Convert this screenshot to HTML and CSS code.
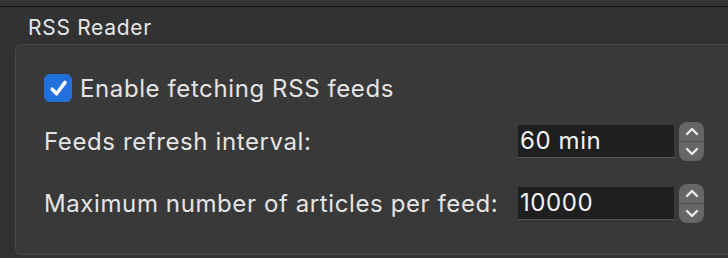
FILE: index.html
```html
<!DOCTYPE html>
<html>
<head>
<meta charset="utf-8">
<link rel="stylesheet" href="styles.css">
</head>
<body>
<div class="window">
  <div class="topbar"></div>
  <div class="title">RSS Reader</div>
  <div class="box">
    <div class="row row-check">
      <span class="checkbox">
        <svg width="27" height="27" viewBox="0 0 27 27"><path d="M7.2 14.2 L11.6 18.8 L20 7.4" fill="none" stroke="#fff" stroke-width="3.5" stroke-linecap="round" stroke-linejoin="round"/></svg>
      </span>
      <span class="label">Enable fetching RSS feeds</span>
    </div>
    <div class="row row-field row-1">
      <span class="label grow">Feeds refresh interval:</span>
      <span class="field">60 min</span>
      <span class="stepper">
        <span class="half up"><svg width="14" height="9" viewBox="0 0 14 9"><path d="M2 7 L7 2 L12 7" fill="none" stroke="#ececec" stroke-width="2.4" stroke-linecap="round" stroke-linejoin="round"/></svg></span>
        <span class="half down"><svg width="14" height="9" viewBox="0 0 14 9"><path d="M2 2 L7 7 L12 2" fill="none" stroke="#ececec" stroke-width="2.4" stroke-linecap="round" stroke-linejoin="round"/></svg></span>
      </span>
    </div>
    <div class="row row-field row-2">
      <span class="label grow">Maximum number of articles per feed:</span>
      <span class="field">10000</span>
      <span class="stepper">
        <span class="half up"><svg width="14" height="9" viewBox="0 0 14 9"><path d="M2 7 L7 2 L12 7" fill="none" stroke="#ececec" stroke-width="2.4" stroke-linecap="round" stroke-linejoin="round"/></svg></span>
        <span class="half down"><svg width="14" height="9" viewBox="0 0 14 9"><path d="M2 2 L7 7 L12 2" fill="none" stroke="#ececec" stroke-width="2.4" stroke-linecap="round" stroke-linejoin="round"/></svg></span>
      </span>
    </div>
  </div>
</div>
</body>
</html>
```

FILE: styles.css
```css
html, body {
  margin: 0;
  padding: 0;
  background: #323232;
}
body {
  width: 728px;
  height: 258px;
  overflow: hidden;
  font-family: Inter, "Liberation Sans", sans-serif;
  color: #e8e8e8;
}
.window {
  width: 728px;
  height: 258px;
}
.topbar {
  height: 6px;
  background: #333333;
  border-bottom: 1px solid #141414;
}
.title {
  height: 37px;
  box-sizing: border-box;
  padding-left: 28px;
  padding-top: 5px;
  font-size: 21px;
  letter-spacing: 0.7px;
  line-height: 32px;
  color: #e6e6e6;
}
.box {
  margin-left: 15px;
  width: 713px;
  height: 211px;
  box-sizing: border-box;
  border: 1px solid #4a4a4a;
  border-right: none;
  border-radius: 7px 0 0 7px;
  background: #393939;
  padding: 29px 0 0 28px;
}
.row {
  display: flex;
  align-items: center;
}
.row-check {
  height: 28px;
  gap: 8px;
}
.row-1 {
  height: 40px;
  margin-top: 19px;
}
.row-2 {
  height: 40px;
  margin-top: 22px;
}
.label {
  font-size: 24px;
  letter-spacing: 0.6px;
  color: #e4e4e4;
  white-space: nowrap;
}
.grow {
  width: 474px;
}
.checkbox {
  width: 28px;
  height: 28px;
  border-radius: 6px;
  background: #2270de;
  display: flex;
  align-items: center;
  justify-content: center;
}
.checkbox svg {
  display: block;
}
.field {
  width: 156px;
  height: 33px;
  box-sizing: border-box;
  background: #1f1f1f;
  border-bottom: 1px solid #565656;
  font-size: 24px;
  letter-spacing: 0.6px;
  line-height: 32px;
  padding-left: 2px;
  color: #f2f2f2;
}
.stepper {
  margin-left: 5px;
  width: 25px;
  height: 39px;
  border-radius: 8px;
  background: #666666;
  display: flex;
  flex-direction: column;
  overflow: hidden;
}
.half {
  flex: 1;
  display: flex;
  align-items: center;
  justify-content: center;
}
.half.up {
  border-bottom: 1px solid #525252;
}
.half svg {
  display: block;
}
```
